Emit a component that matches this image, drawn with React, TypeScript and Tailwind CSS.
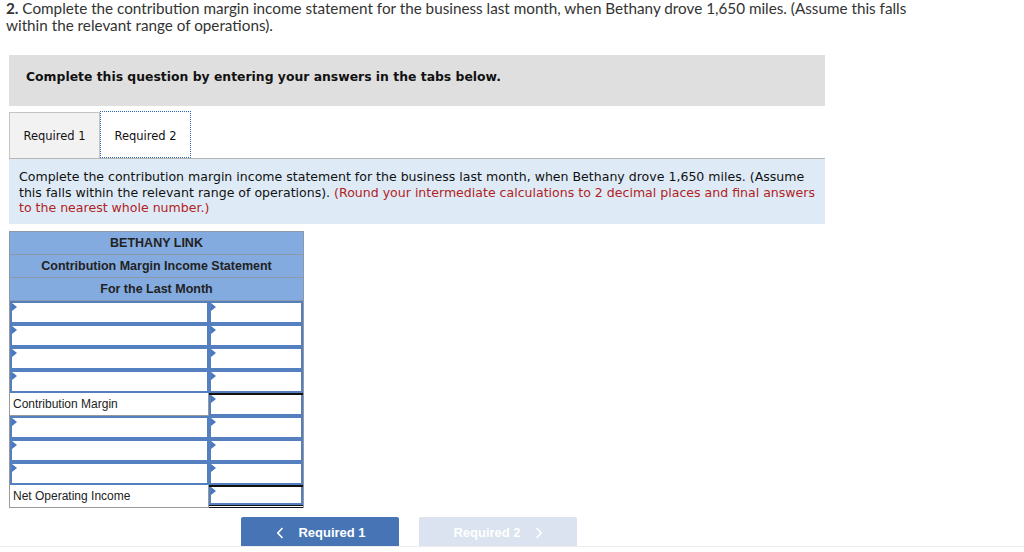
import React from "react";

const Tri = () => (
  <span className="absolute left-0 top-0 w-0 h-0 border-t-[4px] border-b-[4px] border-l-[5px] border-t-transparent border-b-transparent border-l-[#4a78c0]" />
);

const InputCell = () => (
  <div className="relative h-full border-2 border-[#5580bf] bg-white">
    <Tri />
  </div>
);

const Row = ({ label, totals, last }: { label?: string; totals?: boolean; last?: boolean }) => (
  <div className="grid grid-cols-[200px_95px] h-[23px]">
    <div className="border-l border-[#999] h-full">
      {label ? (
        <div className="h-full border-r border-b border-[#999] flex items-center pl-[3px] text-[12px] text-[#222] bg-white">
          {label}
        </div>
      ) : (
        <InputCell />
      )}
    </div>
    <div className="h-full border-r border-[#999]">
      {totals ? (
        <div className={`relative h-full bg-white border-t-2 border-t-[#111] ${last ? "border-b-[3px] border-double border-b-[#111]" : ""}`}>
          <div className="relative h-full border-x-2 border-b-2 border-[#5580bf] border-t-0">
            <Tri />
          </div>
        </div>
      ) : (
        <InputCell />
      )}
    </div>
  </div>
);

const Chevron = ({ dir }: { dir: "left" | "right" }) => (
  <svg width="8" height="12" viewBox="0 0 8 12" className="shrink-0">
    <path
      d={dir === "left" ? "M6.5 1 L1.8 6 L6.5 11" : "M1.5 1 L6.2 6 L1.5 11"}
      fill="none"
      stroke="white"
      strokeWidth="1.6"
    />
  </svg>
);

export default function App() {
  return (
    <div className="w-[1024px] h-[552px] bg-white overflow-hidden relative font-['Lato',sans-serif]">
      <div className="pl-[6px] pt-0 text-[15.25px] leading-[17px] text-[#333] whitespace-nowrap">
        <b>2.</b> Complete the contribution margin income statement for the business last month, when Bethany drove 1,650 miles. (Assume this falls
        <br />
        within the relevant range of operations).
      </div>

      <div className="ml-[9px] mt-[21px] w-[816px] h-[51px] bg-[#dfdfdf] pl-[17px] pt-[13px] font-['DejaVu_Sans',Verdana,sans-serif] font-bold text-[12.4px] text-[#111]">
        Complete this question by entering your answers in the tabs below.
      </div>

      <div className="ml-[9px] mt-[6px] w-[816px] font-['DejaVu_Sans',Verdana,sans-serif]">
        <div className="flex items-end h-[47px] border-b border-[#b5b5b5]">
          <div className="w-[91px] h-[46px] border border-b-0 border-[#c4c4c4] bg-[#f2f2f2] flex items-center justify-center pt-[3px] text-[11.5px] text-[#111]">
            Required 1
          </div>
          <div className="w-[91px] h-[47px] border border-dotted border-[#2f64b8] bg-white flex items-center justify-center pt-[4px] text-[11.5px] text-[#111]">
            Required 2
          </div>
        </div>
        <div className="bg-[#deebf7] h-[65px] pl-[10px] pt-[10px] text-[12.55px] leading-[15.5px] text-[#111] whitespace-nowrap">
          Complete the contribution margin income statement for the business last month, when Bethany drove 1,650 miles. (Assume
          <br />
          this falls within the relevant range of operations). <span className="text-[#b22222]">(Round your intermediate calculations to 2 decimal places and final answers</span>
          <br />
          <span className="text-[#b22222]">to the nearest whole number.)</span>
        </div>
      </div>

      <div className="ml-[9px] mt-[7px] w-[295px] font-['Liberation_Sans',Arial,sans-serif]">
        <div className="border border-[#8c99a8] bg-[#84abe0]">
          <div className="h-[23px] flex items-center justify-center text-[12.5px] font-bold text-[#222] border-b border-[#8c99a8]">
            BETHANY LINK
          </div>
          <div className="h-[23px] flex items-center justify-center text-[12.5px] font-bold text-[#222] border-b border-[#8c99a8]">
            Contribution Margin Income Statement
          </div>
          <div className="h-[22px] flex items-center justify-center text-[12.5px] font-bold text-[#222]">
            For the Last Month
          </div>
        </div>
        <Row />
        <Row />
        <Row />
        <Row />
        <Row label="Contribution Margin" totals />
        <Row />
        <Row />
        <Row />
        <Row label="Net Operating Income" totals last />
      </div>

      <div className="absolute left-0 top-[546px] w-[1024px] h-[6px] border-t border-[#ececec]" />
      <div className="absolute left-[241px] top-[517px] flex gap-[20px] font-['Liberation_Sans',Arial,sans-serif]">
        <div className="w-[158px] h-[29px] bg-[#4674b4] rounded-t-[2px] flex items-center justify-center gap-[14px] pt-[2px] pl-[2px] text-white font-bold text-[13px]">
          <Chevron dir="left" />
          <span>Required 1</span>
        </div>
        <div className="w-[158px] h-[29px] bg-[#dae3ef] rounded-t-[2px] flex items-center justify-center gap-[14px] pt-[2px] text-white font-bold text-[13px]">
          <span>Required 2</span>
          <Chevron dir="right" />
        </div>
      </div>
    </div>
  );
}
